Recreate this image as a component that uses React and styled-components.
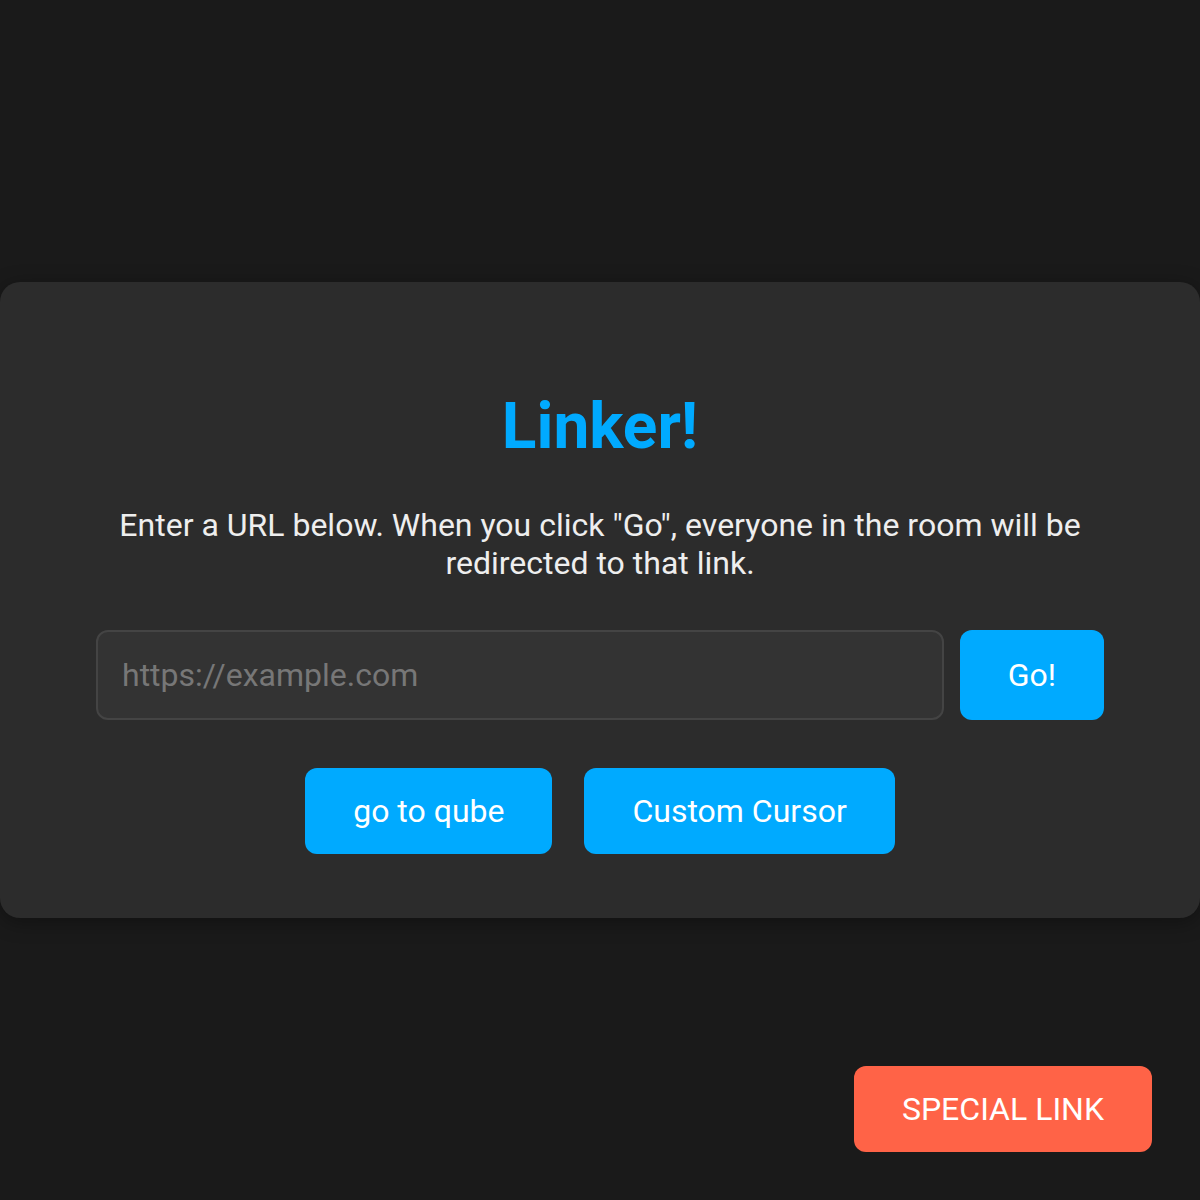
import React from "react";
import styled, { createGlobalStyle } from "styled-components";

const Global = createGlobalStyle`
  html, body { margin: 0; padding: 0; background: #1a1a1a; }
  body { font-family: Roboto, "Liberation Sans", sans-serif; color: #eeeeee; }
  * { box-sizing: border-box; }
`;

const Page = styled.div`
  min-height: 100vh;
  display: flex;
  align-items: center;
  justify-content: center;
`;

const Card = styled.div`
  width: 100%;
  background: #2c2c2c;
  border-radius: 20px;
  box-shadow: 0 4px 20px rgba(0, 0, 0, 0.35);
  padding: 64px 96px;
  display: flex;
  flex-direction: column;
  align-items: center;
  text-align: center;
`;

const Title = styled.h1`
  margin: 43px 0 42px;
  font-size: 64px;
  font-weight: 700;
  line-height: normal;
  color: #00aaff;
`;

const Text = styled.p`
  margin: 0 0 48px;
  font-size: 32px;
  line-height: 38px;
  color: #eeeeee;
  max-width: 1000px;
`;

const InputRow = styled.div`
  width: 100%;
  display: flex;
  gap: 16px;
`;

const UrlInput = styled.input`
  flex: 1;
  min-width: 0;
  height: 90px;
  padding: 0 24px;
  font-family: inherit;
  font-size: 32px;
  color: #eeeeee;
  background: #333333;
  border: 2px solid #444444;
  border-radius: 12px;
  outline: none;
  &::placeholder { color: #777777; }
`;

const Button = styled.button`
  height: ${(p) => p.$h || 86}px;
  padding: 0 48px;
  font-family: inherit;
  font-size: 32px;
  color: #ffffff;
  background: ${(p) => p.$bg || "#00aaff"};
  border: none;
  border-radius: 12px;
  cursor: pointer;
  white-space: nowrap;
`;

const ButtonRow = styled.div`
  margin-top: 48px;
  display: flex;
  gap: 32px;
  justify-content: center;
`;

const Floating = styled.div`
  position: fixed;
  right: 48px;
  bottom: 48px;
`;

export default function App() {
  return (
    <>
      <Global />
      <Page>
        <Card>
          <Title>Linker!</Title>
          <Text>
            Enter a URL below. When you click "Go", everyone in the room will be redirected to that link.
          </Text>
          <InputRow>
            <UrlInput placeholder="https://example.com" />
            <Button $h={90}>Go!</Button>
          </InputRow>
          <ButtonRow>
            <Button>go to qube</Button>
            <Button>Custom Cursor</Button>
          </ButtonRow>
        </Card>
      </Page>
      <Floating>
        <Button $bg="#ff6347">SPECIAL LINK</Button>
      </Floating>
    </>
  );
}
